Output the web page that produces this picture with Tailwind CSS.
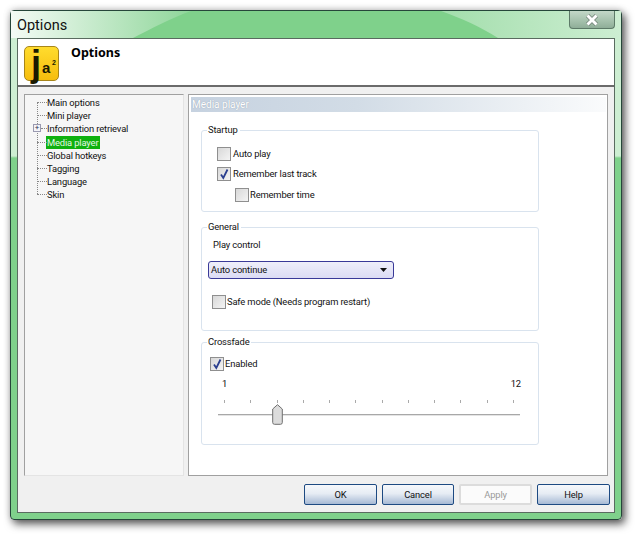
<!DOCTYPE html>
<html lang="en">
<head>
    <meta charset="UTF-8">
    <title>Options</title>
    <script src="https://cdn.jsdelivr.net/npm/@tailwindcss/browser@4"></script>
</head>
<body class="bg-white w-[640px] h-[538px] overflow-hidden font-['Roboto',sans-serif] text-[9.4px] tracking-[-0.15px] text-[#111]">
    <!-- window -->
    <div class="relative ml-[10px] mt-[10px] w-[612px] h-[510px] rounded-[4px] border border-[#26463a] bg-[linear-gradient(to_bottom,#cdeed2_0,#cdeed2_145px,#7fd18b_147px,#7fd18b_100%)] shadow-[3px_4px_9px_rgba(0,0,0,0.65),0_-1px_7px_rgba(0,0,0,0.15)] flex flex-col pl-[6px] pr-[6px] pb-[6px]">
        <svg class="absolute left-0 top-0" width="610" height="27">
            <defs>
                <linearGradient id="lg" x1="0" x2="1" y1="0" y2="0"><stop offset="0" stop-color="#f4fbf5"/><stop offset="1" stop-color="#8fd69a"/></linearGradient>
                <linearGradient id="rg" x1="0" x2="1" y1="0" y2="0"><stop offset="0" stop-color="#a3deac"/><stop offset="1" stop-color="#cdeed2"/></linearGradient>
            </defs>
            <rect width="610" height="27" fill="#7fd18b"/>
            <path d="M0 0H180C160 7 140 18 122 27H0Z" fill="url(#lg)"/>
            <path d="M430 0H610V27H487C470 16 450 7 430 0Z" fill="url(#rg)"/>
        </svg>
        <div class="relative h-[27px] flex items-center pt-[2px] text-[14.5px] tracking-normal text-[#111]">Options</div>
        <!-- close button -->
        <div class="absolute right-[6px] top-0 w-[46px] h-[18px] rounded-b-[4px] border border-t-0 border-[#5d7a68] bg-[linear-gradient(to_bottom,#c3d8c8,#a9c4b0_50%,#8fae98)] flex items-center justify-center">
            <svg width="14" height="14" viewBox="0 0 14 14"><path d="M2.5 2.5L11.5 11.5M11.5 2.5L2.5 11.5" stroke="#6d7d73" stroke-width="4.4"/><path d="M2.5 2.5L11.5 11.5M11.5 2.5L2.5 11.5" stroke="#fff" stroke-width="3"/></svg>
        </div>

        <div class="relative flex-1 flex flex-col border border-[#5a6b60] bg-[#f0f0f0] min-h-0">
            <!-- header -->
            <div class="h-[48px] bg-white border-b-2 border-[#6b6b6b] flex shrink-0">
                <div class="relative ml-[6px] mt-[7px] w-[35px] h-[35px] rounded-[5px] border border-[#a8861a] bg-[linear-gradient(to_bottom,#ffdc2e,#f6bd0d)] font-['Liberation_Sans',sans-serif] font-bold text-[#1a1a00] tracking-normal">
                    <span class="absolute left-[6px] top-[1px] text-[36px] leading-[32px]">j</span>
                    <span class="absolute left-[17px] top-[13px] text-[15px] leading-[15px]">a</span>
                    <span class="absolute left-[27px] top-[12px] text-[7px] leading-[8px]">2</span>
                </div>
                <div class="ml-[12px] mt-[6px] font-['Noto_Sans',sans-serif] font-bold text-[12.5px] tracking-normal leading-[16px] text-black">Options</div>
            </div>
            <!-- body -->
            <div class="flex pl-[6px] pt-[7px] gap-[4px] h-[389px] shrink-0">
                <!-- tree -->
                <div class="relative w-[160px] bg-[#f6f6f6] border border-[#a0a0a0] border-r-[#e4e4e4] border-b-[#e4e4e4] pt-[1px] pl-[22px]">
                    <div class="absolute left-[12px] top-[7px] h-[92px] border-l border-dotted border-[#888]"></div>
                    <div class="relative h-[13.2px] leading-[13px]"><span class="absolute left-[-10px] top-[6px] w-[10px] border-t border-dotted border-[#888]"></span>Main options</div>
                    <div class="relative h-[13.2px] leading-[13px]"><span class="absolute left-[-10px] top-[6px] w-[10px] border-t border-dotted border-[#888]"></span>Mini player</div>
                    <div class="relative h-[13.2px] leading-[13px]">
                        <span class="absolute left-[-14px] top-[2px] w-[8px] h-[8px] border border-[#9a9ab0] bg-[#f4f4f8] flex items-center justify-center text-[8px] leading-[6px] text-[#335]">+</span>
                        <span class="absolute left-[-6px] top-[6px] w-[6px] border-t border-dotted border-[#888]"></span>Information retrieval</div>
                    <div class="relative h-[13.2px] leading-[13px]"><span class="absolute left-[-10px] top-[6px] w-[10px] border-t border-dotted border-[#888]"></span><span class="inline-block whitespace-nowrap bg-[#0fb10f] text-[#e6f5e6] -ml-[1px] pl-[1px] w-[54px]">Media player</span></div>
                    <div class="relative h-[13.2px] leading-[13px]"><span class="absolute left-[-10px] top-[6px] w-[10px] border-t border-dotted border-[#888]"></span>Global hotkeys</div>
                    <div class="relative h-[13.2px] leading-[13px]"><span class="absolute left-[-10px] top-[6px] w-[10px] border-t border-dotted border-[#888]"></span>Tagging</div>
                    <div class="relative h-[13.2px] leading-[13px]"><span class="absolute left-[-10px] top-[6px] w-[10px] border-t border-dotted border-[#888]"></span>Language</div>
                    <div class="relative h-[13.2px] leading-[13px]"><span class="absolute left-[-10px] top-[6px] w-[10px] border-t border-dotted border-[#888]"></span>Skin</div>
                </div>
                <!-- panel -->
                <div class="w-[420px] bg-white border border-[#a0a0a0] pt-[2px] pl-[2px] pr-[1px]">
                    <div class="h-[15px] bg-[linear-gradient(to_right,#c6d2e0,#d2dce6_40%,#fafbfc)] text-white text-[10px] tracking-normal leading-[15px] pl-[1px] [text-shadow:0_0_1px_#8a98a8]">Media player</div>
                    <div class="pl-[10px]">
                        <!-- startup -->
                        <fieldset class="mt-[11px] w-[338px] h-[89px] border border-[#d9e3ee] rounded-[3px] pl-[15px]">
                            <legend class="-ml-[10px] px-[1px] pr-[2px] h-[14px] leading-[14px]">Startup</legend>
                            <div class="flex items-center h-[14px] mt-[10px] gap-[2px]"><span class="w-[14px] h-[14px] border border-[#8f8f8f] bg-[linear-gradient(135deg,#d8d8d8,#f4f4f4)]"></span>Auto play</div>
                            <div class="flex items-center h-[14px] mt-[6px] gap-[2px]">
                                <span class="w-[14px] h-[14px] border border-[#8f8f8f] bg-[linear-gradient(135deg,#d8d8d8,#f4f4f4)]">
                                    <svg width="12" height="12" viewBox="0 0 12 12"><path d="M3 6.5L5.3 10L9.5 1.5" fill="none" stroke="#2b3f8f" stroke-width="1.8"/></svg>
                                </span>Remember last track</div>
                            <div class="flex items-center h-[14px] mt-[7px] ml-[18px] gap-[1px]"><span class="w-[14px] h-[14px] border border-[#8f8f8f] bg-[linear-gradient(135deg,#d8d8d8,#f4f4f4)]"></span>Remember time</div>
                        </fieldset>
                        <!-- general -->
                        <fieldset class="mt-[8px] w-[338px] h-[111px] border border-[#d9e3ee] rounded-[3px] pl-[6px]">
                            <legend class="-ml-[1px] px-[1px] pr-[2px] h-[14px] leading-[14px]">General</legend>
                            <div class="ml-[5px] mt-[4px] h-[14px] leading-[14px]">Play control</div>
                            <div class="mt-[9px] w-[186px] h-[18px] rounded-[3px] border border-[#3a3a98] bg-[linear-gradient(to_bottom,#efeffa,#dcdcf4)] flex items-center justify-between pl-[2px] pr-[5px] leading-[16px]">
                                Auto continue
                                <svg width="8" height="5" viewBox="0 0 8 5"><path d="M0 0H7L3.5 4Z" fill="#111"/></svg>
                            </div>
                            <div class="flex items-center h-[14px] mt-[16px] ml-[4px] gap-[1px]"><span class="w-[14px] h-[14px] border border-[#8f8f8f] bg-[linear-gradient(135deg,#d8d8d8,#f4f4f4)]"></span>Safe mode (Needs program restart)</div>
                        </fieldset>
                        <!-- crossfade -->
                        <fieldset class="relative mt-[4px] w-[338px] h-[110px] border border-[#d9e3ee] rounded-[3px] pl-[8px]">
                            <legend class="-ml-[3px] px-[1px] pr-[2px] h-[14px] leading-[14px]">Crossfade</legend>
                            <div class="flex items-center h-[14px] mt-[8px] gap-[1px]"><span class="w-[14px] h-[14px] border border-[#8f8f8f] bg-[linear-gradient(135deg,#d8d8d8,#f4f4f4)]">
                                <svg width="12" height="12" viewBox="0 0 12 12"><path d="M3 6.5L5.3 10L9.5 1.5" fill="none" stroke="#2b3f8f" stroke-width="1.8"/></svg>
                            </span>Enabled</div>
                            <div class="flex justify-between mt-[6px] ml-[12px] mr-[17px] h-[14px] leading-[14px]"><span>1</span><span>12</span></div>
                            <div class="ml-[14px] w-[290px] mt-[9px] flex justify-between h-[3px]">
                                <i class="w-px h-[3px] bg-[#aaa]"></i><i class="w-px h-[3px] bg-[#aaa]"></i><i class="w-px h-[3px] bg-[#aaa]"></i><i class="w-px h-[3px] bg-[#aaa]"></i><i class="w-px h-[3px] bg-[#aaa]"></i><i class="w-px h-[3px] bg-[#aaa]"></i><i class="w-px h-[3px] bg-[#aaa]"></i><i class="w-px h-[3px] bg-[#aaa]"></i><i class="w-px h-[3px] bg-[#aaa]"></i><i class="w-px h-[3px] bg-[#aaa]"></i><i class="w-px h-[3px] bg-[#aaa]"></i><i class="w-px h-[3px] bg-[#aaa]"></i>
                            </div>
                            <div class="ml-[8px] mt-[11px] w-[302px] h-[2px] bg-[#a8a8a8] border-b border-[#e4e4e4]"></div>
                            <svg class="absolute left-[70px] top-[55px]" width="11" height="21" viewBox="0 0 11 21"><path d="M5.5 .7L10.3 5V18.5Q10.3 20.3 8.5 20.3H2.5Q.7 20.3 .7 18.5V5Z" fill="#dcdcdc" stroke="#6f6f6f"/></svg>
                        </fieldset>
                    </div>
                </div>
            </div>
            <!-- buttons -->
            <div class="flex pl-[286px] pt-[8px] gap-[5px] text-center leading-[19px]">
                <div class="w-[73px] h-[21px] rounded-[2px] border border-[#1d4a82] bg-[linear-gradient(to_bottom,#f6f8fb,#e6ecf4_45%,#a6b9d4)]">OK</div>
                <div class="w-[72px] h-[21px] rounded-[2px] border border-[#1d4a82] bg-[linear-gradient(to_bottom,#f6f8fb,#e6ecf4_45%,#a6b9d4)]">Cancel</div>
                <div class="w-[73px] h-[21px] rounded-[2px] border-2 border-[#dcdcdc] bg-[#fbfbfb] text-[#9a9a9a] leading-[17px]">Apply</div>
                <div class="w-[73px] h-[21px] rounded-[2px] border border-[#1d4a82] bg-[linear-gradient(to_bottom,#f6f8fb,#e6ecf4_45%,#a6b9d4)]">Help</div>
            </div>
        </div>
    </div>
</body>
</html>
